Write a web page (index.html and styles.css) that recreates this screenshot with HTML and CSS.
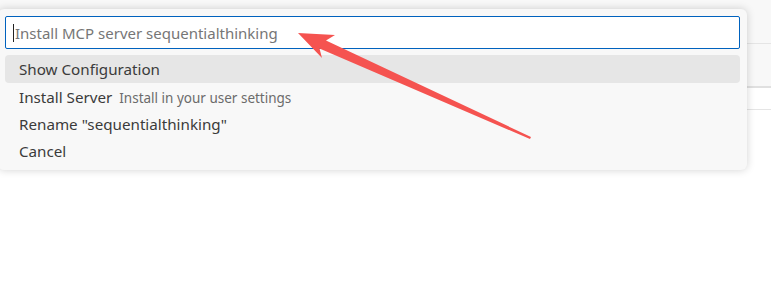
FILE: index.html
```html
<!DOCTYPE html>
<html lang="en">
<head>
  <meta charset="UTF-8">
  <meta name="viewport" content="width=device-width, initial-scale=1.0">
  <title>Quick Pick</title>
  <link rel="stylesheet" href="styles.css">
</head>
<body>
  <div class="page">
    <div class="header">
      <div class="header-top"></div>
      <div class="header-bottom"></div>
    </div>
    <div class="content">
      <div class="content-row"></div>
    </div>
  </div>

  <!-- quick pick popup -->
  <div class="quick-pick">
    <div class="qp-input">
      <span class="caret"></span>
      <span class="placeholder">Install MCP server sequentialthinking</span>
    </div>
    <div class="qp-list">
      <div class="qp-item active">Show Configuration</div>
      <div class="qp-item">Install Server <span class="qp-desc">Install in your user settings</span></div>
      <div class="qp-item">Rename "sequentialthinking"</div>
      <div class="qp-item">Cancel</div>
    </div>
  </div>

  <!-- annotation arrow -->
  <svg class="arrow" width="771" height="290" viewBox="0 0 771 290">
    <polygon points="298,33 335,35 326,40.5 531,137 530,139 319.5,48.5 322,58" fill="#f55350"/>
  </svg>
</body>
</html>
```

FILE: styles.css
```css
body {
  margin: 0;
  font-family: "Noto Sans", "Open Sans", sans-serif;
  background: #fff;
  width: 771px;
  height: 290px;
  overflow: hidden;
  position: relative;
}

.header {
  background: #f8f8f8;
  height: 86px;
  border-bottom: 2px solid #e0e0e0;
}

.header-top {
  height: 43px;
  border-bottom: 1px solid #e5e5e5;
}

.content-row {
  height: 21px;
  border-bottom: 1px solid #e5e5e5;
}

.quick-pick {
  position: absolute;
  top: 9px;
  left: -2px;
  width: 735px;
  padding: 7px 7px 5px 7px;
  background: #f8f8f8;
  border-radius: 6px;
  box-shadow: 0 0 8px rgba(0, 0, 0, 0.18);
}

.qp-input {
  height: 31px;
  border: 1px solid #0062be;
  border-radius: 2px;
  background: #fff;
  display: flex;
  align-items: center;
  padding-left: 7px;
}

.caret {
  width: 1px;
  height: 18px;
  background: #222;
  margin-right: 1px;
}

.placeholder {
  color: #767676;
  font-size: 15px;
}

.qp-list {
  margin-top: 6px;
}

.qp-item {
  height: 27px;
  line-height: 27px;
  padding-left: 14px;
  font-size: 15.2px;
  color: #3b3b3b;
  border-radius: 4px;
}

.qp-item.active {
  height: 28px;
  line-height: 28px;
  margin-bottom: 1px;
  background: #e6e6e6;
}

.qp-desc {
  font-size: 13.5px;
  color: #6b6b6b;
  margin-left: 3px;
}

.arrow {
  position: absolute;
  top: 0;
  left: 0;
}
```
